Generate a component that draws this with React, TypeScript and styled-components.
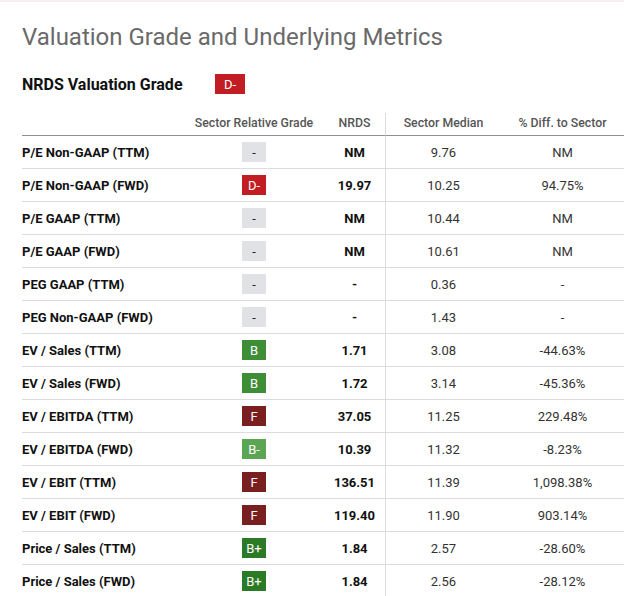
import styled, { createGlobalStyle } from 'styled-components';

type Grade = '-' | 'D-' | 'B' | 'B-' | 'B+' | 'F';

interface Metric {
  label: string;
  grade: Grade;
  nrds: string;
  median: string;
  diff: string;
}

const metrics: Metric[] = [
  { label: 'P/E Non-GAAP (TTM)', grade: '-', nrds: 'NM', median: '9.76', diff: 'NM' },
  { label: 'P/E Non-GAAP (FWD)', grade: 'D-', nrds: '19.97', median: '10.25', diff: '94.75%' },
  { label: 'P/E GAAP (TTM)', grade: '-', nrds: 'NM', median: '10.44', diff: 'NM' },
  { label: 'P/E GAAP (FWD)', grade: '-', nrds: 'NM', median: '10.61', diff: 'NM' },
  { label: 'PEG GAAP (TTM)', grade: '-', nrds: '-', median: '0.36', diff: '-' },
  { label: 'PEG Non-GAAP (FWD)', grade: '-', nrds: '-', median: '1.43', diff: '-' },
  { label: 'EV / Sales (TTM)', grade: 'B', nrds: '1.71', median: '3.08', diff: '-44.63%' },
  { label: 'EV / Sales (FWD)', grade: 'B', nrds: '1.72', median: '3.14', diff: '-45.36%' },
  { label: 'EV / EBITDA (TTM)', grade: 'F', nrds: '37.05', median: '11.25', diff: '229.48%' },
  { label: 'EV / EBITDA (FWD)', grade: 'B-', nrds: '10.39', median: '11.32', diff: '-8.23%' },
  { label: 'EV / EBIT (TTM)', grade: 'F', nrds: '136.51', median: '11.39', diff: '1,098.38%' },
  { label: 'EV / EBIT (FWD)', grade: 'F', nrds: '119.40', median: '11.90', diff: '903.14%' },
  { label: 'Price / Sales (TTM)', grade: 'B+', nrds: '1.84', median: '2.57', diff: '-28.60%' },
  { label: 'Price / Sales (FWD)', grade: 'B+', nrds: '1.84', median: '2.56', diff: '-28.12%' },
];

const gradeColors: Record<Grade, { bg: string; fg: string }> = {
  '-': { bg: '#e1e2e5', fg: '#222' },
  'D-': { bg: '#c21d22', fg: '#fff' },
  B: { bg: '#3e8e38', fg: '#fff' },
  'B-': { bg: '#5ba554', fg: '#fff' },
  'B+': { bg: '#2b7a26', fg: '#fff' },
  F: { bg: '#7a1f1f', fg: '#fff' },
};

const GlobalStyle = createGlobalStyle`
  body {
    margin: 0;
    background: #fff;
    font-family: Roboto, 'Liberation Sans', sans-serif;
  }
`;

const Page = styled.div`
  border-top: 2px solid #f5eff2;
  padding: 20px 0 0 22px;
`;

const Title = styled.h2`
  margin: 0;
  font-size: 24px;
  font-weight: 400;
  color: #6a6a6a;
  line-height: 30px;
`;

const GradeLine = styled.div`
  display: flex;
  align-items: center;
  margin-top: 21px;
  height: 22px;
`;

const GradeTitle = styled.div`
  width: 193px;
  font-size: 16px;
  font-weight: 700;
  color: #111;
`;

const Badge = styled.span<{ $grade: Grade; $wide?: boolean }>`
  display: inline-flex;
  align-items: center;
  justify-content: center;
  width: ${(p) => (p.$wide ? 30 : 24)}px;
  height: 20px;
  font-size: 13px;
  background: ${(p) => gradeColors[p.$grade].bg};
  color: ${(p) => gradeColors[p.$grade].fg};
`;

const Table = styled.div`
  margin-top: 18px;
  display: grid;
  grid-template-columns: 172px 120px 71px 116px 1fr;
`;

const HeaderCell = styled.div<{ $divider?: boolean; $shift?: number }>`
  height: 23px;
  padding-top: 3px;
  box-sizing: border-box;
  white-space: nowrap;
  border-bottom: 1px solid #8c9297;
  border-left: ${(p) => (p.$divider ? '1px solid #dcdcdc' : 'none')};
  padding-left: ${(p) => p.$shift ?? 0}px;
  font-size: 12.3px;
  font-weight: 500;
  color: #555;
  text-align: center;
`;

const Cell = styled.div<{ $align?: 'left' | 'center'; $bold?: boolean; $divider?: boolean; $shift?: number }>`
  height: 33px;
  box-sizing: border-box;
  display: flex;
  align-items: center;
  justify-content: ${(p) => (p.$align === 'left' ? 'flex-start' : 'center')};
  white-space: nowrap;
  border-bottom: 1px solid #dcdcdc;
  border-left: ${(p) => (p.$divider ? '1px solid #dcdcdc' : 'none')};
  padding-left: ${(p) => p.$shift ?? 0}px;
  font-size: 13px;
  font-weight: ${(p) => (p.$bold ? 700 : 400)};
  color: ${(p) => (p.$bold ? '#111' : '#333')};
`;

export default function App() {
  return (
    <>
      <GlobalStyle />
      <Page>
        <Title>Valuation Grade and Underlying Metrics</Title>
        <GradeLine>
          <GradeTitle>NRDS Valuation Grade</GradeTitle>
          <Badge $grade="D-" $wide>
            D-
          </Badge>
        </GradeLine>
        <Table>
          <HeaderCell />
          <HeaderCell>Sector Relative Grade</HeaderCell>
          <HeaderCell $shift={10}>NRDS</HeaderCell>
          <HeaderCell $divider>Sector Median</HeaderCell>
          <HeaderCell>% Diff. to Sector</HeaderCell>
          {metrics.map((m) => (
            <Row key={m.label} metric={m} />
          ))}
        </Table>
      </Page>
    </>
  );
}

function Row({ metric }: { metric: Metric }) {
  return (
    <>
      <Cell $align="left" $bold>
        {metric.label}
      </Cell>
      <Cell>
        <Badge $grade={metric.grade}>{metric.grade}</Badge>
      </Cell>
      <Cell $bold $shift={10}>
        {metric.nrds}
      </Cell>
      <Cell $divider>{metric.median}</Cell>
      <Cell>{metric.diff}</Cell>
    </>
  );
}
